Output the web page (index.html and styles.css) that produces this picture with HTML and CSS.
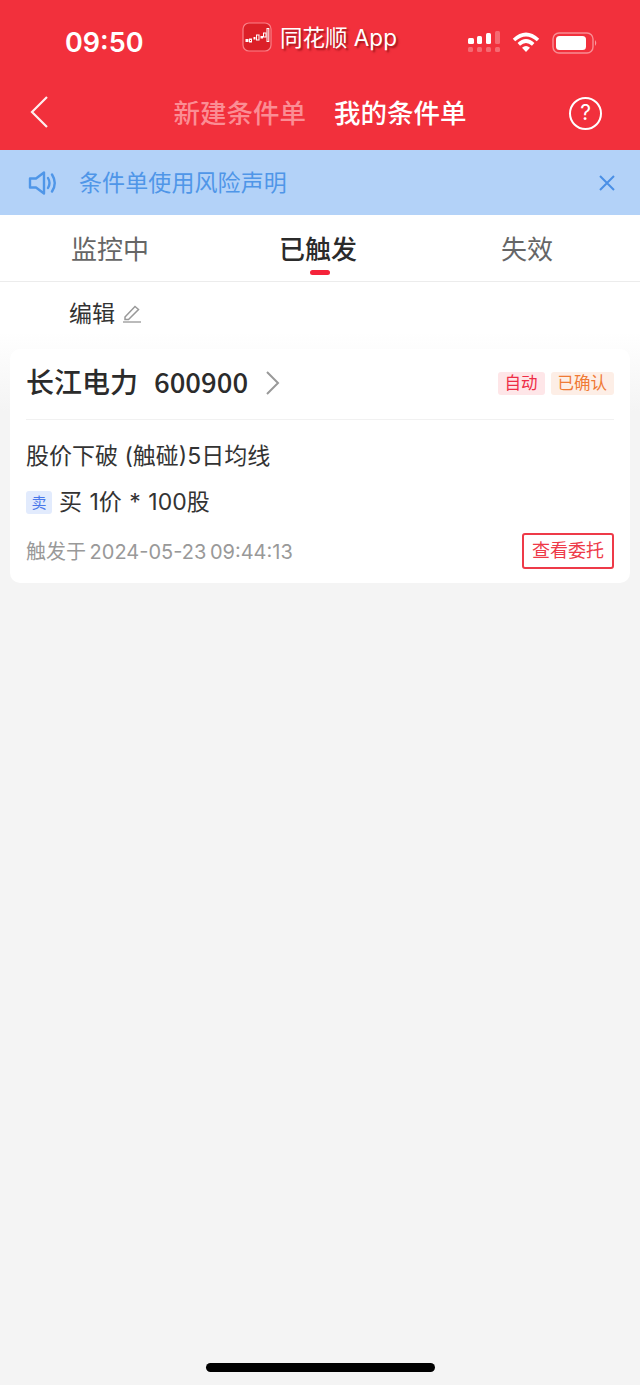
FILE: index.html
```html
<!DOCTYPE html>
<html lang="zh-CN">
<head>
  <meta charset="UTF-8">
  <title>我的条件单</title>
  <link rel="stylesheet" href="styles.css">
</head>
<body>

  <header class="top">
    <div class="status">
      <span class="time">09:50</span>
      <div class="source">
        <svg class="app-icon" width="30" height="30" viewBox="0 0 30 30">
          <rect x="1" y="1" width="28" height="28" rx="6" fill="#dc2028" stroke="#f98088" stroke-width="1.2"/>
          <g fill="#fff">
            <rect x="3.5" y="17" width="3" height="3"/>
            <rect x="11.5" y="15" width="2" height="2.5"/>
            <rect x="18.5" y="14" width="2.5" height="2.5"/>
          </g>
          <g fill="none" stroke="#fff" stroke-width="1">
            <rect x="7.5" y="17" width="2" height="3"/>
            <rect x="14.5" y="13" width="2.5" height="5"/>
            <rect x="21.5" y="11" width="2.5" height="4"/>
            <rect x="25" y="6.5" width="1.8" height="13"/>
          </g>
        </svg>
        <span class="source-name">同花顺 App</span>
      </div>
      <div class="status-icons">
        <svg width="32" height="24" viewBox="0 0 32 24">
          <g fill="#fff">
            <rect x="0" y="7" width="6" height="6" rx="1.5"/>
            <rect x="9" y="5" width="5" height="8" rx="1.5"/>
            <rect x="18" y="2" width="5" height="11" rx="1.5"/>
          </g>
          <g fill="#fff" opacity=".28">
            <rect x="27" y="0" width="5" height="13" rx="1.5"/>
            <rect x="0" y="16" width="5" height="5" rx="1.5"/>
            <rect x="9" y="16" width="5" height="5" rx="1.5"/>
            <rect x="18" y="16" width="5" height="5" rx="1.5"/>
            <rect x="27" y="16" width="5" height="5" rx="1.5"/>
          </g>
        </svg>
        <svg width="28" height="21" viewBox="0 0 28 21">
          <path d="M2 8 Q14 -3 26 8" fill="none" stroke="#fff" stroke-width="3.6"/>
          <path d="M6.8 12.4 Q14 5.6 21.2 12.4" fill="none" stroke="#fff" stroke-width="3.6"/>
          <path d="M10 15.8 Q14 12 18 15.8 L14 20Z" fill="#fff"/>
        </svg>
        <svg width="46" height="22" viewBox="0 0 46 22">
          <rect x="1" y="1" width="40" height="20" rx="6" fill="none" stroke="#fff" stroke-opacity=".45" stroke-width="1.4"/>
          <rect x="4" y="4" width="30" height="14" rx="3.5" fill="#fff"/>
          <path d="M43 8 Q45.5 11 43 14Z" fill="#fff" fill-opacity=".5"/>
        </svg>
      </div>
    </div>
    <nav class="nav">
      <svg class="back" width="20" height="34" viewBox="0 0 20 34">
        <path d="M18 2 L3 17 L18 32" fill="none" stroke="#fff" stroke-width="2.2" opacity=".92"/>
      </svg>
      <div class="nav-tabs">
        <span class="nav-tab dim">新建条件单</span>
        <span class="nav-tab">我的条件单</span>
      </div>
      <span class="help">?</span>
    </nav>
  </header>

  <div class="notice">
    <svg class="speaker" width="30" height="26" viewBox="0 0 30 26">
      <path d="M2 8.5 H8 L16 2.5 V23.5 L8 17.5 H2Z" fill="none" stroke="#4f96e8" stroke-width="2.4" stroke-linejoin="round"/>
      <path d="M20 8 Q23 13 20 18 M24 4.5 Q29.5 13 24 21.5" fill="none" stroke="#4f96e8" stroke-width="2.4" stroke-linecap="round"/>
    </svg>
    <span class="notice-text">条件单使用风险声明</span>
    <svg class="close" width="16" height="16" viewBox="0 0 16 16">
      <path d="M1 1 L15 15 M15 1 L1 15" stroke="#4a8fe6" stroke-width="2"/>
    </svg>
  </div>

  <div class="tabs">
    <span class="tab">监控中</span>
    <span class="tab active">已触发</span>
    <span class="tab last">失效</span>
  </div>

  <main class="content">
    <div class="edit-row">
      <span class="edit">编辑</span>
      <svg class="pen" width="20" height="20" viewBox="0 0 20 20">
        <path d="M3 14 L13 3.5 L16.5 6.5 L6.5 16.5 H3Z" fill="none" stroke="#999" stroke-width="1.5"/>
        <path d="M1 19 H19" stroke="#aaa" stroke-width="1.6"/>
      </svg>
    </div>

    <section class="card">
      <div class="card-head">
        <span class="stock">长江电力</span>
        <span class="code">600900</span>
        <svg class="chevron" width="16" height="26" viewBox="0 0 16 26">
          <path d="M2 2 L13 13 L2 24" fill="none" stroke="#999" stroke-width="2"/>
        </svg>
        <div class="tags">
          <span class="tag red">自动</span>
          <span class="tag orange">已确认</span>
        </div>
      </div>
      <div class="card-body">
        <p class="cond">股价下破 (触碰)5日均线</p>
        <div class="order">
          <span class="side">卖</span>
          <span class="order-text">买 1价 * 100股</span>
        </div>
        <div class="card-foot">
          <span class="when">触发于 2024-05-23 09:44:13</span>
          <span class="btn">查看委托</span>
        </div>
      </div>
    </section>
  </main>

  <div class="home-bar"></div>

</body>
</html>
```

FILE: styles.css
```css
* {
  box-sizing: border-box;
}

body {
  font-family: 'Inter', 'Noto Sans CJK SC', sans-serif;
  background-color: #f4f4f4;
  margin: 0;
  width: 640px;
  height: 1385px;
  color: #333;
  position: relative;
  overflow: hidden;
}

.top {
  height: 150px;
  background-color: #f2303c;
  color: #fff;
}

.status {
  height: 80px;
  display: flex;
  align-items: center;
  padding: 0 42px 0 65px;
  position: relative;
}

.time {
  font-family: 'Inter', 'Liberation Sans', sans-serif;
  font-size: 27px;
  font-weight: 600;
  padding-top: 5px;
}

.source {
  position: absolute;
  left: 242px;
  top: 20px;
  display: flex;
  align-items: center;
  gap: 8px;
}

.source-name {
  font-size: 22.5px;
  line-height: 32px;
  padding-top: 2px;
  color: #fff;
  text-shadow: 2px 2px 2px rgba(90, 0, 0, 0.55);
}

.status-icons {
  margin-left: auto;
  display: flex;
  align-items: center;
  gap: 12px;
  padding-top: 5px;
}

.nav {
  height: 70px;
  display: flex;
  align-items: center;
  justify-content: space-between;
  padding: 0 38px 4px 29px;
}

.back {
  margin-bottom: 2px;
}

.nav-tabs {
  display: flex;
  gap: 28px;
  padding: 0 0 1px 22px;
}

.nav-tab {
  font-size: 26.5px;
  font-weight: 500;
  line-height: 36px;
}

.nav-tab.dim {
  color: #fb8d94;
}

.help {
  width: 33px;
  height: 33px;
  border: 2.5px solid #fff;
  border-radius: 50%;
  font-size: 21px;
  line-height: 28px;
  text-align: center;
}

.notice {
  height: 65px;
  background-color: #b3d2f8;
  display: flex;
  align-items: center;
  padding: 0 25px 0 28px;
}

.notice-text {
  font-size: 23px;
  color: #4f96e8;
  margin-left: 21px;
  padding-bottom: 4px;
  letter-spacing: 0.1px;
}

.close {
  margin-left: auto;
}

.tabs {
  height: 67px;
  background-color: #fff;
  border-bottom: 1px solid #ececec;
  display: flex;
  gap: 130px;
  padding: 0 87px 0 71px;
}

.tab {
  font-size: 26px;
  line-height: 66px;
  padding-top: 2px;
  color: #666;
  position: relative;
}

.tab.active {
  font-weight: 500;
  color: #2b2b2b;
}

.tab.active::after {
  content: "";
  position: absolute;
  left: 31px;
  bottom: 6px;
  width: 20px;
  height: 5px;
  border-radius: 3px;
  background-color: #f5233a;
}

.tab.last {
  margin-left: auto;
}

.content {
  background: linear-gradient(#fff 50px, #f4f4f4 130px);
  padding: 0 10px;
}

.edit-row {
  height: 67px;
  display: flex;
  align-items: center;
  gap: 7px;
  padding: 0 0 8px 59px;
}

.edit {
  font-size: 23px;
  color: #333;
}

.pen {
  margin-top: 3px;
}

.card {
  background-color: #fff;
  border-radius: 10px;
  padding: 0 16px 13px 16px;
  height: 234px;
}

.card-head {
  height: 71px;
  display: flex;
  align-items: center;
  padding-bottom: 2px;
  border-bottom: 1.5px solid #f1f1f1;
}

.stock {
  font-size: 28px;
  font-weight: 500;
  color: #2b2b2b;
  padding-bottom: 4px;
}

.code {
  font-family: 'Noto Sans CJK SC', sans-serif;
  font-size: 27.5px;
  font-weight: 500;
  color: #2b2b2b;
  margin-left: 16px;
  padding-bottom: 4px;
}

.chevron {
  margin-left: 17px;
}

.tags {
  margin-left: auto;
  display: flex;
  gap: 6px;
}

.tag {
  font-size: 16.5px;
  line-height: 23px;
  padding: 0 7px;
  border-radius: 3px;
}

.tag.red {
  background-color: #fee6e8;
  color: #ee2d46;
}

.tag.orange {
  background-color: #fdeee6;
  color: #f07a35;
}

.cond {
  margin: 19px 0 0;
  font-size: 23px;
  line-height: 34px;
  color: #333;
}

.order {
  margin-top: 12px;
  display: flex;
  align-items: center;
  gap: 7px;
  font-size: 23px;
  line-height: 34px;
  color: #333;
}

.order-text {
  word-spacing: 1px;
}

.side {
  width: 26px;
  height: 23px;
  background-color: #e2ebfd;
  color: #4a78ea;
  border-radius: 3px;
  font-size: 15px;
  line-height: 23px;
  text-align: center;
}

.card-foot {
  margin-top: 14px;
  display: flex;
  align-items: center;
  justify-content: space-between;
}

.when {
  font-size: 20px;
  color: #999;
  word-spacing: -2px;
  padding-bottom: 2px;
}

.btn {
  width: 92px;
  height: 36px;
  border: 2px solid #ee3a48;
  border-radius: 3px;
  color: #ee3a48;
  font-size: 18px;
  line-height: 32px;
  text-align: center;
}

.home-bar {
  position: absolute;
  left: 206px;
  top: 1363px;
  width: 229px;
  height: 9px;
  border-radius: 5px;
  background-color: #000;
}
```
